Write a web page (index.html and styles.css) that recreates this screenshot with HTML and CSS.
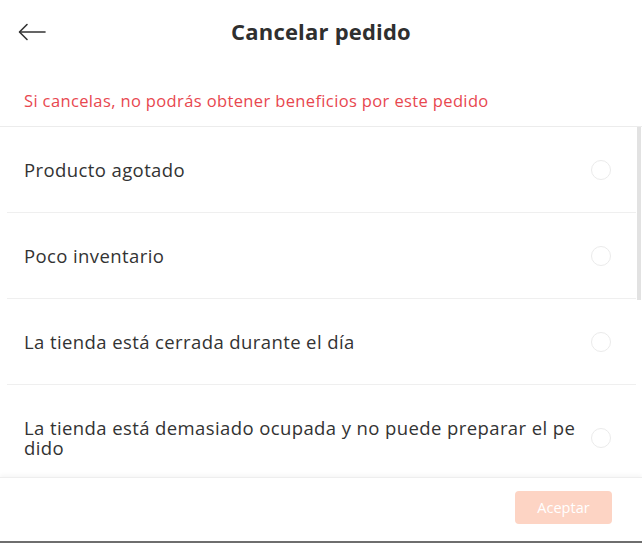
FILE: index.html
```html
<!DOCTYPE html>
<html lang="es">
<head>
<meta charset="utf-8">
<title>Cancelar pedido</title>
<link rel="stylesheet" href="styles.css">
</head>
<body>
<div class="dialog">
  <header class="header">
    <button class="back" aria-label="Volver">
      <svg width="28" height="18" viewBox="0 0 28 18" fill="none" stroke="#333" stroke-width="1.6" stroke-linecap="round" stroke-linejoin="round">
        <path d="M27 9H2"/>
        <path d="M9 1.5L1.5 9L9 16.5"/>
      </svg>
    </button>
    <h1 class="title">Cancelar pedido</h1>
  </header>
  <p class="notice">Si cancelas, no podrás obtener beneficios por este pedido</p>
  <div class="list-wrap">
    <ul class="list">
      <li class="row"><span class="label">Producto agotado</span><span class="radio"></span></li>
      <li class="row"><span class="label">Poco inventario</span><span class="radio"></span></li>
      <li class="row"><span class="label">La tienda está cerrada durante el día</span><span class="radio"></span></li>
      <li class="row"><span class="label wrap">La tienda está demasiado ocupada y no puede preparar el pedido</span><span class="radio"></span></li>
    </ul>
    <div class="thumb"></div>
  </div>
  <footer class="footer">
    <button class="accept" disabled>Aceptar</button>
  </footer>
</div>
</body>
</html>
```

FILE: styles.css
```css
* { box-sizing: border-box; }
html, body { margin: 0; padding: 0; background: #fff; }
body {
  font-family: "Open Sans", "Noto Sans", sans-serif;
  color: #333;
}
.dialog {
  width: 642px;
  height: 543px;
  display: flex;
  flex-direction: column;
  border-bottom: 2px solid #6e6e6e;
  overflow: hidden;
}
.header {
  height: 62px;
  display: flex;
  align-items: center;
  justify-content: center;
  position: relative;
  flex: none;
}
.back {
  position: absolute;
  left: 18px;
  top: 23px;
  padding: 0;
  border: 0;
  background: none;
  line-height: 0;
}
.title {
  margin: 0;
  font-size: 22px;
  font-weight: 700;
  color: #2f2f2f;
  letter-spacing: 0.2px;
}
.notice {
  margin: 0;
  flex: none;
  height: 65px;
  padding: 28px 24px 0;
  font-size: 16.5px;
  letter-spacing: 0.37px;
  line-height: 22px;
  color: #e8474f;
  border-bottom: 1px solid #ececec;
}
.list-wrap {
  flex: 1;
  position: relative;
  overflow: hidden;
}
.list {
  list-style: none;
  margin: 0;
  padding: 0;
}
.row {
  margin: 0 6px 0 7px;
  padding: 33px 25px 32px 17px;
  display: flex;
  align-items: center;
  justify-content: space-between;
  border-bottom: 1px solid #efefef;
}
.row:last-child { border-bottom: 0; }
.label {
  font-size: 18.5px;
  letter-spacing: 0.4px;
  line-height: 20px;
  color: #333;
}
.label.wrap {
  width: 556px;
  word-break: break-all;
}
.radio {
  width: 20px;
  height: 20px;
  flex: none;
  border-radius: 50%;
  border: 1px solid #ebebeb;
  margin-top: -1px;
}
.thumb {
  position: absolute;
  right: 1px;
  top: 0;
  width: 4px;
  height: 173px;
  background: #e2e2e2;
}
.footer {
  flex: none;
  height: 64px;
  display: flex;
  align-items: center;
  justify-content: flex-end;
  padding: 0 30px 4px 0;
  border-top: 1px solid #eeeeee;
  box-shadow: 0 -2px 4px rgba(0,0,0,0.04);
  position: relative;
}
.accept {
  width: 97px;
  height: 33px;
  border: 0;
  border-radius: 4px;
  background: #fdd4c4;
  color: #fff;
  font-family: "Open Sans", "Noto Sans", sans-serif;
  font-size: 14.5px;
  padding: 0;
}
```
